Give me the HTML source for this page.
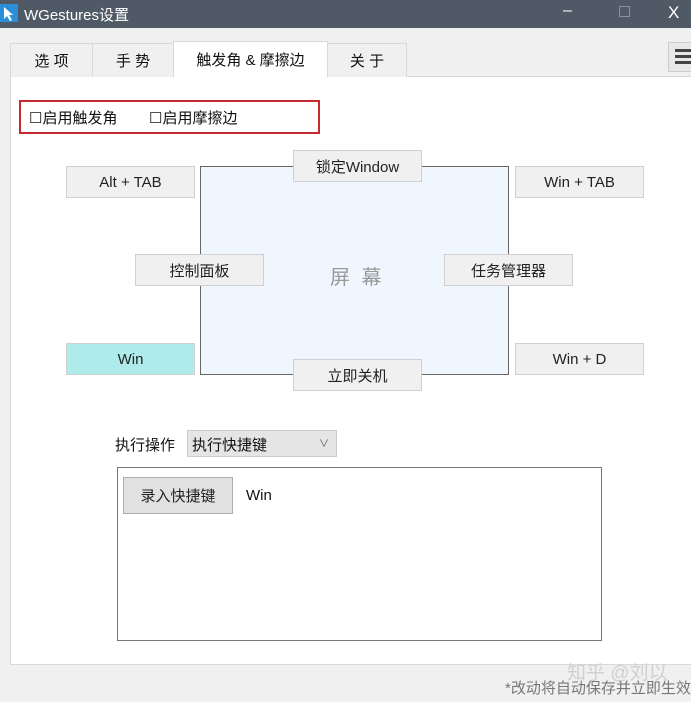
<!DOCTYPE html>
<html><head><meta charset="utf-8"><style>
*{box-sizing:border-box;margin:0;padding:0}
body{width:691px;height:702px;background:#f0f0f0;position:relative;overflow:hidden;font-family:"Liberation Sans","Noto Sans CJK SC",sans-serif;font-size:14px;color:#111}
.a{position:absolute}
.btn{position:absolute;background:#f0f0f0;border:1px solid #d0d0d0;display:flex;align-items:center;justify-content:center;font-size:15px;color:#222}
.tab{position:absolute;top:43px;height:34px;background:#f0f0f0;border:1px solid #d9d9d9;border-bottom:none;display:flex;align-items:center;justify-content:center;font-size:15px}
</style></head><body>
<div class="a" style="left:0;top:0;width:691px;height:28px;background:#505a66"></div>
<svg class="a" style="left:0;top:4px" width="20" height="20"><rect x="0" y="0" width="18" height="18" fill="#2a8fd8"/><path d="M4 3 L4 15 L7 12 L10 17 L12 16 L9 11 L13 11 Z" fill="#fff"/></svg>
<div class="a" style="left:24px;top:4px;color:#fff;font-size:15px">WGestures设置</div>
<div class="a" style="left:563px;top:2px;color:#fff;font-size:16px">–</div>
<div class="a" style="left:619px;top:6px;width:11px;height:11px;border:1px solid #8a929b"></div>
<div class="a" style="left:668px;top:3px;color:#fff;font-size:17px">X</div>
<div class="a" style="left:10px;top:76px;width:690px;height:589px;background:#fff;border:1px solid #d9d9d9"></div>
<div class="tab" style="left:10px;width:83px">选 项</div>
<div class="tab" style="left:92px;width:82px">手 势</div>
<div class="tab" style="left:173px;top:41px;height:37px;width:155px;background:#fff;border-bottom:1px solid #fff">触发角 &amp; 摩擦边</div>
<div class="tab" style="left:327px;width:80px">关 于</div>
<div class="a" style="left:668px;top:42px;width:26px;height:30px;background:#e8e8e8;border:1px solid #ccc"></div>
<div class="a" style="left:675px;top:49px;width:16px;height:3px;background:#444;box-shadow:0 6px 0 #444,0 12px 0 #444"></div>
<div class="a" style="left:19px;top:100px;width:301px;height:34px;border:2px solid #c8282e"></div>
<div class="a" style="left:29px;top:107px;font-size:15px">☐启用触发角</div>
<div class="a" style="left:149px;top:107px;font-size:15px">☐启用摩擦边</div>
<div class="a" style="left:200px;top:166px;width:309px;height:209px;background:#eff6fd;border:1px solid #666"></div>
<div class="a" style="left:330px;top:261px;color:#999;font-size:20px;letter-spacing:3px">屏 幕</div>
<div class="btn" style="left:293px;top:150px;width:129px;height:32px">锁定Window</div>
<div class="btn" style="left:66px;top:166px;width:129px;height:32px">Alt + TAB</div>
<div class="btn" style="left:515px;top:166px;width:129px;height:32px">Win + TAB</div>
<div class="btn" style="left:135px;top:254px;width:129px;height:32px">控制面板</div>
<div class="btn" style="left:444px;top:254px;width:129px;height:32px">任务管理器</div>
<div class="btn" style="left:66px;top:343px;width:129px;height:32px;background:#aeecec">Win</div>
<div class="btn" style="left:515px;top:343px;width:129px;height:32px">Win + D</div>
<div class="btn" style="left:293px;top:359px;width:129px;height:32px">立即关机</div>
<div class="a" style="left:115px;top:434px;font-size:15px">执行操作</div>
<div class="a" style="left:187px;top:430px;width:150px;height:27px;background:#e5e5e5;border:1px solid #ccc;padding:3px 0 0 4px;font-size:15px">执行快捷键<span style="position:absolute;right:7px;top:4px;font-size:10px;color:#555">∨</span></div>
<div class="a" style="left:117px;top:467px;width:485px;height:174px;border:1px solid #777;background:#fff"></div>
<div class="btn" style="left:123px;top:477px;width:110px;height:37px;background:#e1e1e1;border-color:#adadad">录入快捷键</div>
<div class="a" style="left:246px;top:487px;font-size:15px">Win</div>
<div class="a" style="left:567px;top:658px;color:#d0d0d0;font-size:19px;white-space:nowrap">知乎 @刘以</div>
<div class="a" style="left:505px;top:677px;color:#777;font-size:15px;white-space:nowrap">*改动将自动保存并立即生效</div>
</body></html>
